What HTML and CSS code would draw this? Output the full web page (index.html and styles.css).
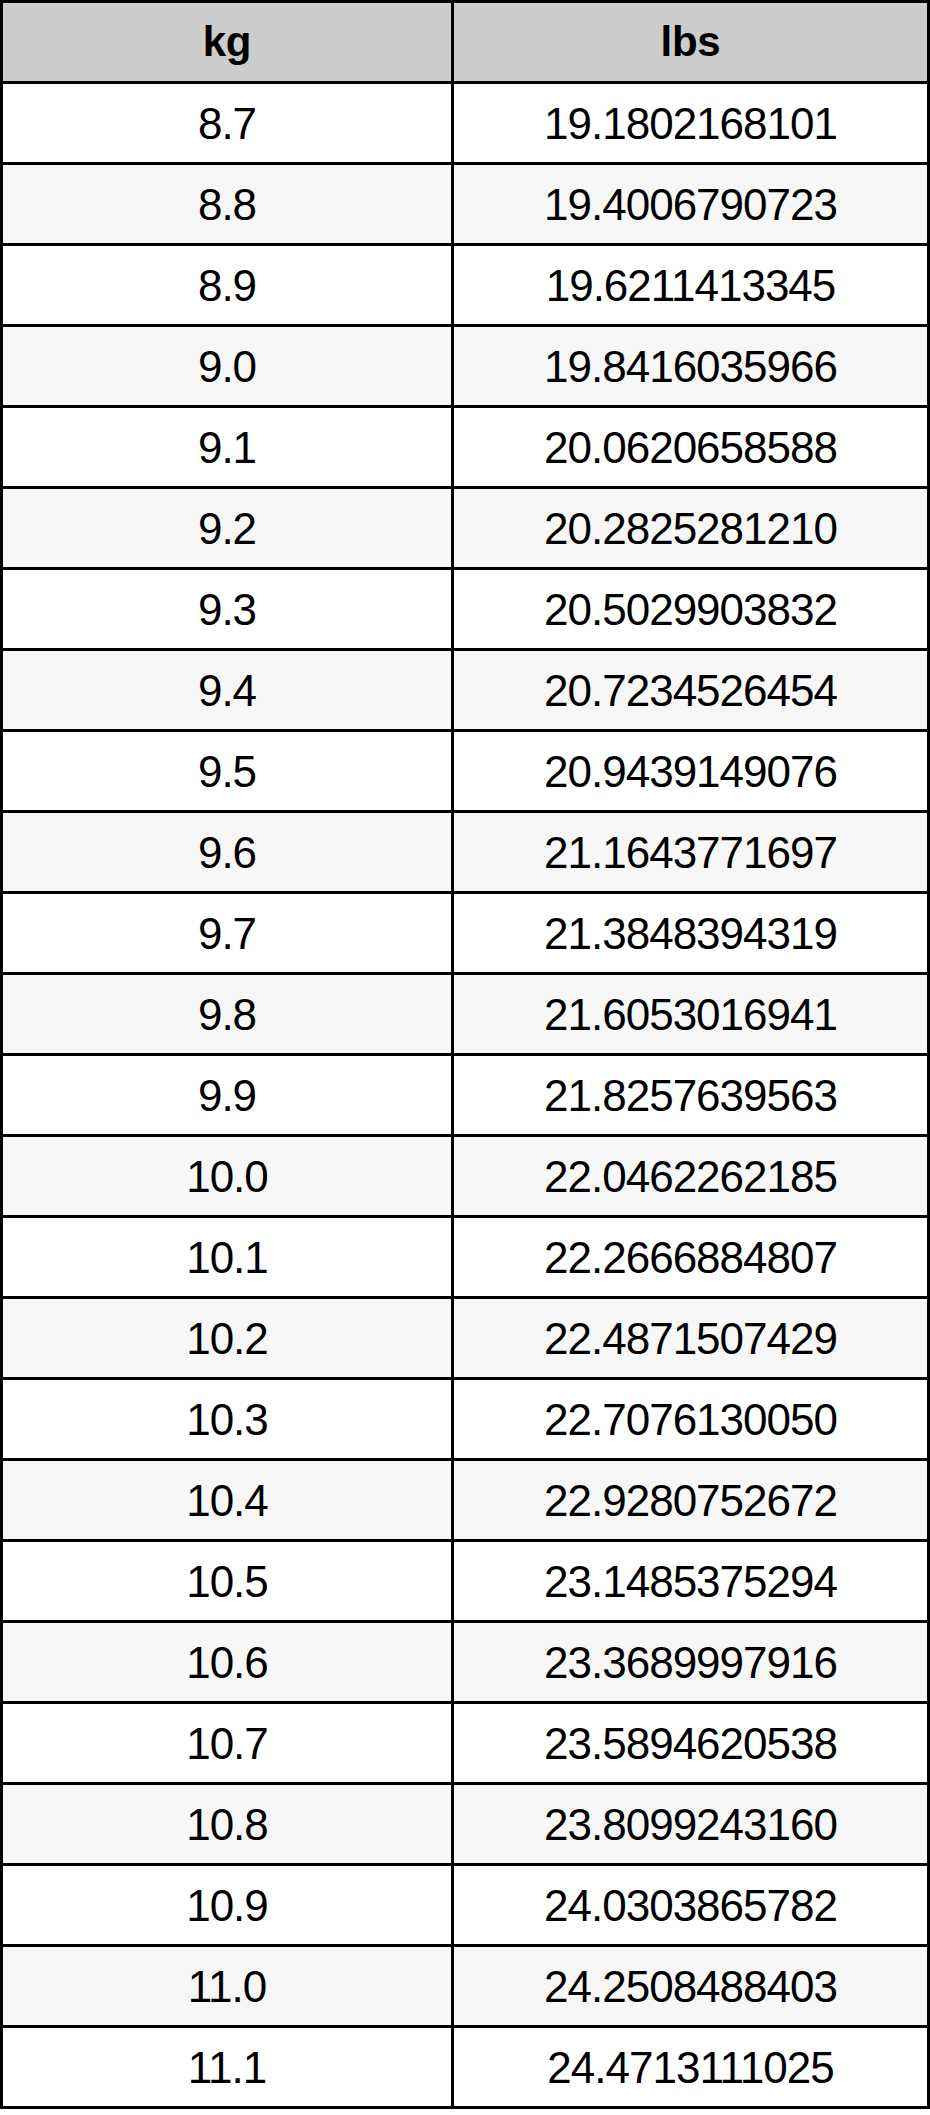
FILE: index.html
```html
<!DOCTYPE html>
<html lang="en">
<head>
<meta charset="utf-8">
<title>kg to lbs</title>
<link rel="stylesheet" href="styles.css">
</head>
<body>
<table class="conv">
  <thead>
    <tr><th class="c1">kg</th><th class="c2">lbs</th></tr>
  </thead>
  <tbody>
    <tr><td>8.7</td><td>19.1802168101</td></tr>
    <tr><td>8.8</td><td>19.4006790723</td></tr>
    <tr><td>8.9</td><td>19.6211413345</td></tr>
    <tr><td>9.0</td><td>19.8416035966</td></tr>
    <tr><td>9.1</td><td>20.0620658588</td></tr>
    <tr><td>9.2</td><td>20.2825281210</td></tr>
    <tr><td>9.3</td><td>20.5029903832</td></tr>
    <tr><td>9.4</td><td>20.7234526454</td></tr>
    <tr><td>9.5</td><td>20.9439149076</td></tr>
    <tr><td>9.6</td><td>21.1643771697</td></tr>
    <tr><td>9.7</td><td>21.3848394319</td></tr>
    <tr><td>9.8</td><td>21.6053016941</td></tr>
    <tr><td>9.9</td><td>21.8257639563</td></tr>
    <tr><td>10.0</td><td>22.0462262185</td></tr>
    <tr><td>10.1</td><td>22.2666884807</td></tr>
    <tr><td>10.2</td><td>22.4871507429</td></tr>
    <tr><td>10.3</td><td>22.7076130050</td></tr>
    <tr><td>10.4</td><td>22.9280752672</td></tr>
    <tr><td>10.5</td><td>23.1485375294</td></tr>
    <tr><td>10.6</td><td>23.3689997916</td></tr>
    <tr><td>10.7</td><td>23.5894620538</td></tr>
    <tr><td>10.8</td><td>23.8099243160</td></tr>
    <tr><td>10.9</td><td>24.0303865782</td></tr>
    <tr><td>11.0</td><td>24.2508488403</td></tr>
    <tr><td>11.1</td><td>24.4713111025</td></tr>
  </tbody>
</table>
</body>
</html>
```
FILE: styles.css
```css
html, body {
  margin: 0;
  padding: 0;
  background: #ffffff;
}

.conv {
  border-collapse: separate;
  border-spacing: 0;
  table-layout: fixed;
  width: 930px;
  border-top: 3px solid #000;
  border-left: 3px solid #000;
  font-family: "Liberation Sans", Arial, sans-serif;
  color: #000;
}

.conv th,
.conv td {
  box-sizing: border-box;
  height: 81px;
  padding: 0;
  border-right: 3px solid #000;
  border-bottom: 3px solid #000;
  text-align: center;
  vertical-align: middle;
  line-height: 1;
}

.conv th.c1 {
  width: 451px;
}

.conv th {
  background: #cccccc;
  font-size: 42px;
  font-weight: bold;
  letter-spacing: -0.3px;
}

.conv td {
  font-size: 44px;
  font-weight: normal;
  letter-spacing: -1px;
  padding-top: 1px;
}

.conv tbody tr:nth-child(even) td {
  background: #f7f7f7;
}
```
